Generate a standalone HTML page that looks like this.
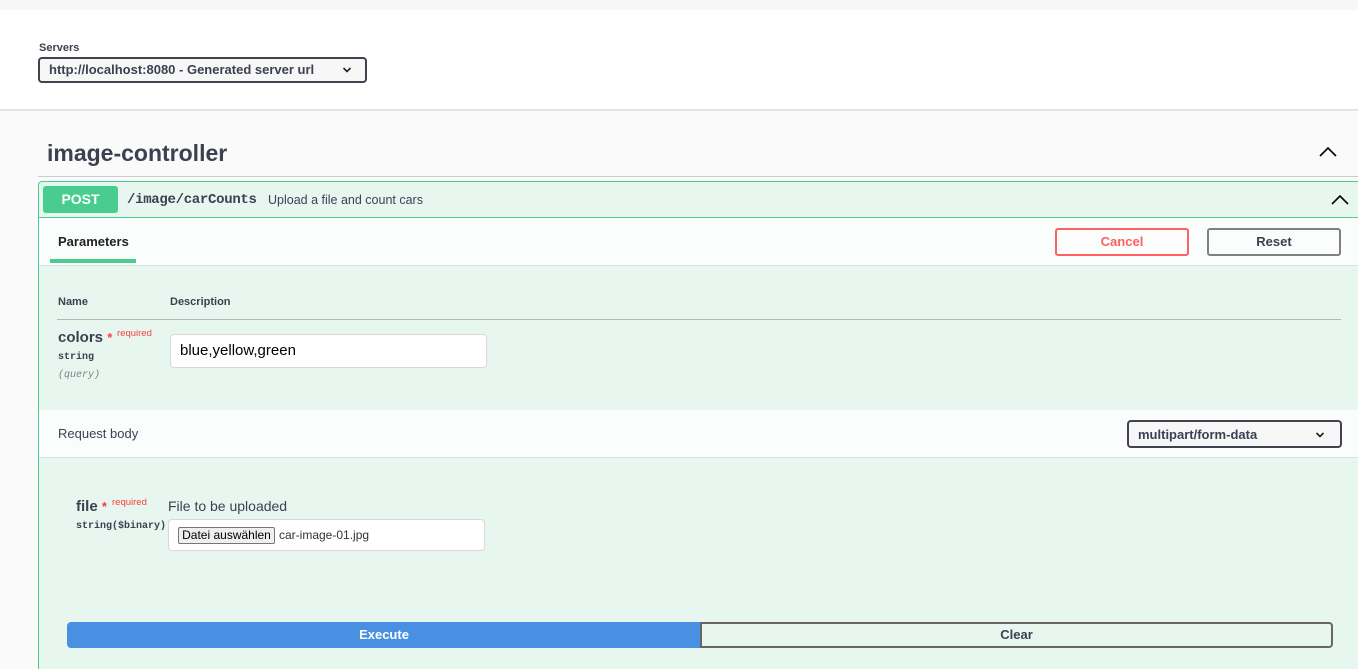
<!DOCTYPE html>
<html><head><style>
*{box-sizing:border-box;margin:0;padding:0}
html,body{width:1358px;height:669px;overflow:hidden}
body{background:#fafafa;font-family:"Liberation Sans",Arial,sans-serif;color:#3b4151;position:relative}
.abs{position:absolute}
.mono{font-family:"Liberation Mono","DejaVu Sans Mono",monospace}
</style></head><body>
<div class="abs" style="left:0;top:0;width:1358px;height:10px;background:#f7f7f7"></div>
<div class="abs" style="left:0;top:10px;width:1358px;height:101px;background:#fff;border-bottom:2px solid #e4e4e4"></div>
<div class="abs" style="left:39px;top:42px;font-size:11px;font-weight:bold;color:#3b4151">Servers</div>
<div class="abs" style="left:38px;top:57px;width:329px;height:26px;border:2px solid #41444e;border-radius:4px;background:#f7f7f7;font-size:13px;font-weight:bold;padding:3px 0 0 9px;color:#3b4151">http://localhost:8080 - Generated server url
<svg class="abs" style="left:302px;top:7px" width="10" height="8" viewBox="0 0 10 8"><path d="M1.5 2l3.5 3.5L8.5 2" fill="none" stroke="#222" stroke-width="1.6"/></svg></div>

<div class="abs" style="left:47px;top:140px;font-size:23px;font-weight:bold;color:#3b4151">image-controller</div>
<svg class="abs" style="left:1318px;top:145px" width="20" height="13" viewBox="0 0 20 13"><path d="M2 11L10 3l8 8" fill="none" stroke="#000" stroke-width="1.6"/></svg>
<div class="abs" style="left:38px;top:176px;width:1320px;height:1px;background:#ccc"></div>

<div class="abs" style="left:38px;top:181px;width:1330px;height:520px;border:1px solid #49cc90;border-radius:4px;background:#e8f6f0"></div>
<div class="abs" style="left:39px;top:217px;width:1319px;height:1px;background:#49cc90"></div>
<div class="abs" style="left:43px;top:186px;width:75px;height:27px;background:#49cc90;border-radius:3px;color:#fff;font-weight:bold;font-size:14px;text-align:center;line-height:27px">POST</div>
<div class="abs mono" style="left:127px;top:192px;font-size:14px;font-weight:bold;color:#3b4151;letter-spacing:-0.3px">/image/carCounts</div>
<div class="abs" style="left:268px;top:193px;font-size:12.5px;color:#3b4151">Upload a file and count cars</div>
<svg class="abs" style="left:1330px;top:193px" width="20" height="13" viewBox="0 0 20 13"><path d="M2 11L10 3l8 8" fill="none" stroke="#000" stroke-width="1.6"/></svg>

<div class="abs" style="left:39px;top:218px;width:1319px;height:48px;background:#fbfcfc;border-bottom:1px solid #d8e5df"></div>
<div class="abs" style="left:58px;top:234px;font-size:13px;font-weight:bold;color:#222">Parameters</div>
<div class="abs" style="left:50px;top:259px;width:86px;height:4px;background:#49cc90"></div>
<div class="abs" style="left:1055px;top:228px;width:134px;height:28px;border:2px solid #ff6060;border-radius:3px;color:#ff6060;font-weight:bold;font-size:13px;text-align:center;line-height:24px">Cancel</div>
<div class="abs" style="left:1207px;top:228px;width:134px;height:28px;border:2px solid #808080;border-radius:3px;color:#3b4151;font-weight:bold;font-size:13px;text-align:center;line-height:24px">Reset</div>

<div class="abs" style="left:58px;top:296px;font-size:11px;font-weight:bold;color:#3b4151">Name</div>
<div class="abs" style="left:170px;top:296px;font-size:11px;font-weight:bold;color:#3b4151">Description</div>
<div class="abs" style="left:57px;top:319px;width:1284px;height:1px;background:#a8bcb3"></div>
<div class="abs" style="left:58px;top:329px;font-size:15px;font-weight:bold;color:#3b4151">colors <span style="color:#f93e3e;font-size:13px">*</span></div>
<div class="abs" style="left:117px;top:328px;font-size:9.5px;color:#f93e3e">required</div>
<div class="abs mono" style="left:58px;top:352px;font-size:10px;font-weight:bold;color:#3b4151">string</div>
<div class="abs mono" style="left:58px;top:370px;font-size:10px;font-style:italic;color:#808080">(query)</div>
<div class="abs" style="left:170px;top:334px;width:317px;height:34px;background:#fff;border:1px solid #d9d9d9;border-radius:4px;font-size:15px;color:#000;padding:7px 0 0 9px">blue,yellow,green</div>

<div class="abs" style="left:39px;top:410px;width:1319px;height:48px;background:#fbfcfc;border-bottom:1px solid #d8e5df"></div>
<div class="abs" style="left:58px;top:426px;font-size:13px;color:#3b4151">Request body</div>
<div class="abs" style="left:1127px;top:420px;width:215px;height:28px;border:2px solid #41444e;border-radius:4px;background:#f7f7f7;font-size:13px;font-weight:bold;padding:5px 0 0 9px;color:#3b4151">multipart/form-data
<svg class="abs" style="left:186px;top:9px" width="10" height="8" viewBox="0 0 10 8"><path d="M1.5 2l3.5 3.5L8.5 2" fill="none" stroke="#222" stroke-width="1.6"/></svg></div>

<div class="abs" style="left:76px;top:498px;font-size:15px;font-weight:bold;color:#3b4151">file <span style="color:#f93e3e;font-size:13px">*</span></div>
<div class="abs" style="left:112px;top:497px;font-size:9.5px;color:#f93e3e">required</div>
<div class="abs mono" style="left:76px;top:521px;font-size:10px;font-weight:bold;color:#3b4151">string($binary)</div>
<div class="abs" style="left:168px;top:498px;font-size:14px;color:#3b4151">File to be uploaded</div>
<div class="abs" style="left:168px;top:519px;width:317px;height:32px;background:#fff;border:1px solid #d9d9d9;border-radius:4px"></div>
<div class="abs" style="left:178px;top:527px;width:97px;height:17px;background:#efefef;border:1px solid #767676;border-radius:2px;font-size:12px;color:#000;text-align:center;line-height:15px">Datei auswählen</div>
<div class="abs" style="left:279px;top:528px;font-size:12px;color:#333">car-image-01.jpg</div>

<div class="abs" style="left:67px;top:622px;width:634px;height:26px;background:#4990e2;border:1px solid #4990e2;border-radius:4px 0 0 4px;color:#fff;font-weight:bold;font-size:13px;text-align:center;line-height:24px">Execute</div>
<div class="abs" style="left:700px;top:622px;width:633px;height:26px;border:2px solid #666;border-radius:0 4px 4px 0;color:#3b4151;font-weight:bold;font-size:13px;text-align:center;line-height:22px">Clear</div>
</body></html>
